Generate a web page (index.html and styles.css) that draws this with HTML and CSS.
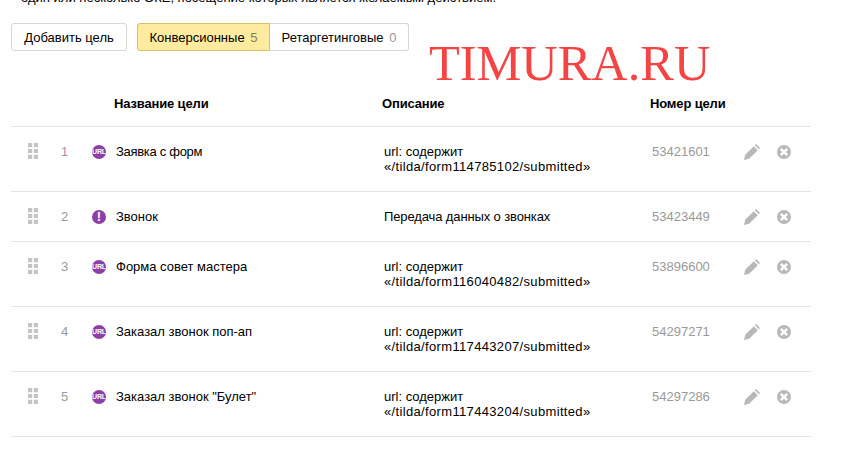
FILE: index.html
```html
<!DOCTYPE html>
<html lang="ru">
<head>
<meta charset="utf-8">
<title>Цели</title>
<link rel="stylesheet" href="styles.css">
</head>
<body>
<svg class="defs" width="0" height="0" aria-hidden="true">
  <symbol id="grip" viewBox="0 0 10 16"><path d="M0 0h4.200v4.200H0zM5.800 0H10v4.200H5.800zM0 5.900h4.200v4.200H0zM5.800 5.900H10v4.200H5.800zM0 11.800h4.200V16H0zM5.800 11.800H10V16H5.800z"/></symbol>
  <symbol id="pencil" viewBox="0 0 16 16"><path d="M0 16l1.200-5.200L9.800 2.200l4 4-8.600 8.600zM10.800 1.200 12 0l4 4-1.200 1.200z"/></symbol>
  <symbol id="close" viewBox="0 0 14 14"><path fill-rule="evenodd" d="M7 0a7 7 0 1 1 0 14A7 7 0 0 1 7 0zM4.700 2.900 2.900 4.700 5.200 7 2.900 9.300l1.800 1.800L7 8.800l2.300 2.300 1.800-1.800L8.800 7l2.300-2.300-1.800-1.800L7 5.200z"/></symbol>
</svg>
<p class="intro">один или несколько ОКЕ, посещение которых является желаемым действием.</p>
<div class="toolbar">
  <button class="btn">Добавить цель</button>
  <div class="tabs">
    <button class="tab tab-active">Конверсионные <span class="count">5</span></button>
    <button class="tab">Ретаргетинговые <span class="count">0</span></button>
  </div>
</div>
<div class="watermark">TIMURA.RU</div>
<div class="table">
  <div class="head">
    <span class="h-name">Название цели</span>
    <span>Описание</span>
    <span>Номер цели</span>
  </div>
  <div class="row row-tall">
    <svg class="grip"><use href="#grip"/></svg>
    <span class="num">1</span>
    <span class="badge">URL</span>
    <span class="name name-short">Заявка с форм</span>
    <span class="desc">url: содержит<br><span class="path">«/tilda/form114785102/submitted»</span></span>
    <span class="id">53421601</span>
    <svg class="pencil"><use href="#pencil"/></svg>
    <svg class="close"><use href="#close"/></svg>
  </div>
  <div class="row">
    <svg class="grip"><use href="#grip"/></svg>
    <span class="num">2</span>
    <span class="badge badge-alert">!</span>
    <span class="name">Звонок</span>
    <span class="desc desc-plain">Передача данных о звонках</span>
    <span class="id">53423449</span>
    <svg class="pencil"><use href="#pencil"/></svg>
    <svg class="close"><use href="#close"/></svg>
  </div>
  <div class="row row-tall">
    <svg class="grip"><use href="#grip"/></svg>
    <span class="num">3</span>
    <span class="badge">URL</span>
    <span class="name">Форма совет мастера</span>
    <span class="desc">url: содержит<br><span class="path">«/tilda/form116040482/submitted»</span></span>
    <span class="id">53896600</span>
    <svg class="pencil"><use href="#pencil"/></svg>
    <svg class="close"><use href="#close"/></svg>
  </div>
  <div class="row row-tall">
    <svg class="grip"><use href="#grip"/></svg>
    <span class="num">4</span>
    <span class="badge">URL</span>
    <span class="name">Заказал звонок поп-ап</span>
    <span class="desc">url: содержит<br><span class="path">«/tilda/form117443207/submitted»</span></span>
    <span class="id">54297271</span>
    <svg class="pencil"><use href="#pencil"/></svg>
    <svg class="close"><use href="#close"/></svg>
  </div>
  <div class="row row-tall">
    <svg class="grip"><use href="#grip"/></svg>
    <span class="num">5</span>
    <span class="badge">URL</span>
    <span class="name">Заказал звонок "Булет"</span>
    <span class="desc">url: содержит<br><span class="path">«/tilda/form117443204/submitted»</span></span>
    <span class="id">54297286</span>
    <svg class="pencil"><use href="#pencil"/></svg>
    <svg class="close"><use href="#close"/></svg>
  </div>
</div>
</body>
</html>
```
FILE: styles.css
```css
* { box-sizing: border-box; }
html, body { margin: 0; padding: 0; height: 467px; overflow: hidden; background: #fff; }
body {
  position: relative;
  font-family: "Liberation Sans", Arial, sans-serif;
  font-size: 13px;
  color: #000;
}
.defs { position: absolute; }
.intro {
  margin: -10px 0 0 21px;
  height: 33px;
  line-height: 15px;
  font-size: 13px;
  white-space: nowrap;
}
.toolbar { display: flex; gap: 10px; margin-left: 11px; height: 28px; }
button {
  font: inherit;
  color: #000;
  height: 28px;
  padding: 0;
  background: #fff;
  border: 1px solid #d6d6d6;
  cursor: pointer;
}
.btn { width: 116px; border-radius: 3px; }
.tabs { display: flex; }
.tab { width: 139px; border-radius: 0 3px 3px 0; border-left: 0; }
.tab-active {
  width: 133px;
  background: #ffeba0;
  border: 1px solid #d8bf6e;
  border-radius: 3px 0 0 3px;
}
.count { color: #999; margin-left: 2px; }
.tab-active .count { color: #8a7f55; }
.watermark {
  position: absolute;
  left: 429px;
  top: 35px;
  font-family: "Liberation Serif", "Times New Roman", serif;
  font-size: 50.4px;
  line-height: 56px;
  color: #f44444;
  white-space: nowrap;
}
.table { margin: 0 0 0 11px; width: 800px; }
.head {
  display: grid;
  grid-template-columns: 268px 268px auto;
  height: 76px;
  padding: 0 0 15px 103px;
  align-items: end;
  line-height: 15px;
  font-weight: bold;
  letter-spacing: -0.15px;
  border-bottom: 1px solid #e5e5e5;
}
.row {
  display: grid;
  grid-template-columns: 17px 47px 14px 278px 268px 92px 33px 14px;
  height: 50px;
  padding: 17px 0 0 17px;
  border-bottom: 1px solid #e5e5e5;
  line-height: 15px;
  align-items: start;
}
.row-tall { height: 65px; }
.grip { width: 10px; height: 16px; fill: #c4c4c4; margin-top: -1px; }
.num { color: #999; margin-left: 16px; }
.badge {
  width: 14px;
  height: 14px;
  margin-top: 1px;
  border-radius: 50%;
  background: #8c3fa8;
  color: #fff;
  font-size: 7px;
  font-weight: bold;
  line-height: 14px;
  text-align: center;
  letter-spacing: -0.2px;
  overflow: hidden;
}
.badge-alert { font-size: 13px; letter-spacing: 0; }
.name { padding-left: 10px; white-space: nowrap; }
.name-short { letter-spacing: -0.3px; }
.desc { white-space: nowrap; }
.desc-plain { letter-spacing: -0.12px; }
.path { letter-spacing: 0.34px; }
.id { color: #999; }
.pencil { width: 16px; height: 16px; fill: #b8b8b8; }
.close { width: 14px; height: 14px; fill: #b8b8b8; margin-top: 1px; }
```
